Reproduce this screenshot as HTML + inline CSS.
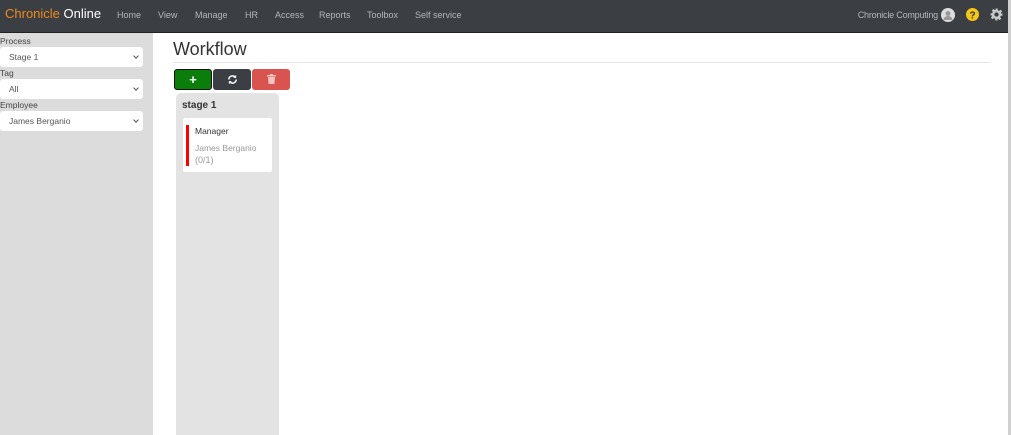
<!DOCTYPE html>
<html><head><meta charset="utf-8"><style>
*{box-sizing:border-box;margin:0;padding:0}
body{width:1011px;height:435px;overflow:hidden;background:#fff;font-family:"Liberation Sans",sans-serif;position:relative}
.nav{position:absolute;left:0;top:0;width:1008px;height:33px;background:#3b3e42;border-bottom:1px solid #222}
.brand{position:absolute;left:5px;top:6px;font-size:13px;color:#f08a1c}
.brand b{color:#fff;font-weight:normal}
.nav a{position:absolute;top:10px;font-size:9px;color:#b4b7bb}
.side{position:absolute;left:0;top:33px;width:153px;height:402px;background:#dcdcdc}
.lbl{position:absolute;left:0;font-size:8.5px;color:#444}
.sel{position:absolute;left:0;width:143px;height:20px;background:#fff;border-radius:3px;font-size:8.5px;color:#555;padding:5px 0 0 9px}
.sel:after{content:"";position:absolute;right:5px;top:7px;width:3px;height:3px;border-right:1px solid #555;border-bottom:1px solid #555;transform:rotate(45deg)}
h1{position:absolute;left:173px;top:39px;font-size:18px;font-weight:normal;color:#333}
.hr{position:absolute;left:173px;top:62px;width:818px;height:1px;background:#e5e5e5}
.btn{position:absolute;top:69px;height:21px;border-radius:3px;color:#fff;font-weight:bold;text-align:center;font-size:13px;line-height:20px}
.col{position:absolute;left:176px;top:93px;width:103px;height:342px;background:#e3e3e3;border-radius:5px 5px 0 0}
.card{position:absolute;left:183px;top:118px;width:89px;height:54px;background:#fff;border-radius:2px}
.scroll{position:absolute;left:1008px;top:0;width:3px;height:435px;background:#d0d0d0}
</style></head><body>
<div class="nav">
<div class="brand">Chronicle <b>Online</b></div>
<a style="left:117px">Home</a><a style="left:158px">View</a><a style="left:195px">Manage</a><a style="left:245px">HR</a><a style="left:275px">Access</a><a style="left:319px">Reports</a><a style="left:367px">Toolbox</a><a style="left:415px">Self service</a>
<a style="left:838px;width:100px;text-align:right;letter-spacing:-0.2px">Chronicle Computing</a>
<svg style="position:absolute;left:941px;top:8px" width="14" height="14"><circle cx="7" cy="7" r="7" fill="#ddd"/><circle cx="7" cy="5.5" r="2.5" fill="#999"/><path d="M2.5 12a4.5 4 0 0 1 9 0z" fill="#999"/></svg>
<svg style="position:absolute;left:966px;top:8px" width="13" height="13"><circle cx="6.5" cy="6.5" r="6.5" fill="#f5c518"/><text x="6.5" y="10.5" font-size="10" font-weight="bold" text-anchor="middle" fill="#333" font-family="Liberation Sans">?</text></svg>
<svg style="position:absolute;left:990px;top:8px" width="13" height="13" viewBox="0 0 24 24"><path fill="#c8c8c8" d="M10 1h4l.6 3.2 2.2 1 2.7-1.9 2.8 2.8-1.9 2.7 1 2.2L23 10v4l-3.2.6-1 2.2 1.9 2.7-2.8 2.8-2.7-1.9-2.2 1L14 23h-4l-.6-3.2-2.2-1-2.7 1.9-2.8-2.8 1.9-2.7-1-2.2L1 14v-4l3.2-.6 1-2.2-1.9-2.7 2.8-2.8 2.7 1.9 2.2-1zM12 8a4 4 0 1 0 0 8 4 4 0 0 0 0-8z"/></svg>
</div>
<div class="side">
<div class="lbl" style="top:3px">Process</div><div class="sel" style="top:14px">Stage 1</div>
<div class="lbl" style="top:35px">Tag</div><div class="sel" style="top:46px">All</div>
<div class="lbl" style="top:67px">Employee</div><div class="sel" style="top:78px">James Berganio</div>
</div>
<h1>Workflow</h1><div class="hr"></div>
<div class="btn" style="left:174px;width:38px;background:#0a7d0a;border:1px solid #111">+</div>
<div class="btn" style="left:213px;width:38px;background:#3b3e42"><svg width="11" height="11" viewBox="0 0 12 12" style="margin-top:5px"><path d="M2 6a4 4 0 0 1 7-2.6M10 6a4 4 0 0 1-7 2.6" stroke="#fff" stroke-width="1.6" fill="none"/><path d="M10 1v3.2H6.8zM2 11V7.8h3.2z" fill="#fff"/></svg></div>
<div class="btn" style="left:252px;width:38px;background:#d9534f"><svg width="9" height="10" viewBox="0 0 9 10" style="margin-top:5px"><rect x="0" y="1" width="9" height="1.5" fill="#f4c4c3"/><rect x="3" y="0" width="3" height="1.5" fill="#f4c4c3"/><path d="M1 3h7l-.6 7H1.6z" fill="#f4c4c3"/></svg></div>
<div class="col"></div>
<div style="position:absolute;left:182px;top:100px;font-size:10px;font-weight:bold;color:#333">stage 1</div>
<div class="card"><div style="position:absolute;left:3px;top:7px;width:3px;height:41px;background:#f00"></div>
<div style="position:absolute;left:12px;top:8px;font-size:8.5px;color:#333">Manager</div>
<div style="position:absolute;left:12px;top:25px;font-size:8.5px;color:#999">James Berganio</div>
<div style="position:absolute;left:12px;top:37px;font-size:9px;color:#999">(0/1)</div></div>
<div class="scroll"></div>
</body></html>
